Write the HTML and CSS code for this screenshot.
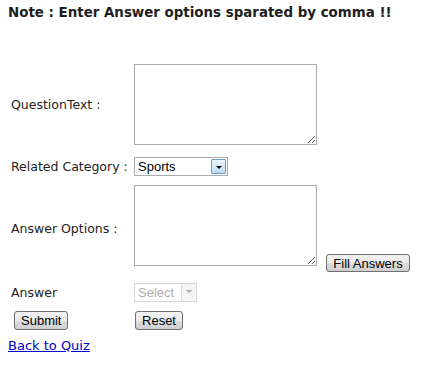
FILE: index.html
```html
<!DOCTYPE html>
<html lang="en">
<head>
    <meta charset="UTF-8">
    <meta name="viewport" content="width=device-width, initial-scale=1.0">
    <title>Add Question</title>
    <link rel="stylesheet" href="styles.css">
</head>
<body>
    <h4 class="note">Note : Enter Answer options sparated by comma !!</h4>

    <form class="question-form">
        <div class="form-row">
            <label class="field-label" for="questionText">QuestionText :</label>
            <div class="field">
                <textarea id="questionText"></textarea>
            </div>
        </div>

        <div class="form-row row-category">
            <label class="field-label" for="category">Related Category :</label>
            <div class="field">
                <span class="select-wrap category-select">
                    <select id="category">
                        <option>Sports</option>
                        <option>Movies</option>
                        <option>General</option>
                    </select>
                    <span class="select-arrow"></span>
                </span>
            </div>
        </div>

        <div class="form-row row-options">
            <label class="field-label" for="answerOptions">Answer Options :</label>
            <div class="field field-bottom">
                <textarea id="answerOptions" class="options-box"></textarea>
                <button type="button" class="fill-btn">Fill Answers</button>
            </div>
        </div>

        <div class="form-row row-answer">
            <label class="field-label" for="answer">Answer</label>
            <div class="field">
                <span class="select-wrap answer-select">
                    <select id="answer" disabled>
                        <option>Select</option>
                    </select>
                    <span class="select-arrow"></span>
                </span>
            </div>
        </div>

        <div class="form-row row-buttons">
            <div class="field-label">
                <button type="submit" class="submit-btn">Submit</button>
            </div>
            <div class="field">
                <button type="reset" class="reset-btn">Reset</button>
            </div>
        </div>
    </form>

    <a href="#" class="back-link">Back to Quiz</a>
</body>
</html>
```

FILE: styles.css
```css
body {
    margin: 0;
    padding: 4px 8px;
    font-family: "DejaVu Sans", Tahoma, sans-serif;
    font-size: 12.5px;
    color: #222;
    background-color: #fff;
}
.note {
    margin: 0;
    font-size: 13.4px;
    line-height: 18px;
    font-weight: bold;
    color: #1e1e1e;
}
.question-form {
    margin-top: 42px;
    margin-left: 3px;
    display: flex;
    flex-direction: column;
    gap: 9px;
}
.form-row {
    display: flex;
    align-items: center;
}
.field-label {
    width: 123px;
    flex-shrink: 0;
    white-space: nowrap;
}
.field {
    display: flex;
    align-items: center;
}
.field-bottom {
    align-items: flex-end;
}
.row-category {
    margin-top: 3px;
}
.row-answer {
    margin-top: 2px;
}
textarea {
    display: block;
    width: 183px;
    height: 81px;
    box-sizing: border-box;
    margin: 0;
    border: 1px solid #a9a9a9;
    font-family: "Liberation Sans", Arial, sans-serif;
    font-size: 13px;
}
.options-box {
    margin-bottom: 6px;
}
.select-wrap {
    position: relative;
    display: inline-block;
}
select {
    display: block;
    margin: 0;
    height: 19px;
    box-sizing: border-box;
    padding: 0 0 0 3px;
    border: 1px solid #a9a9a9;
    border-radius: 0;
    background-color: #fff;
    font-family: "Liberation Sans", Arial, sans-serif;
    font-size: 13px;
    color: #000;
    appearance: none;
    -webkit-appearance: none;
}
.category-select select {
    width: 94px;
    border-color: #a5acb2;
}
.answer-select select {
    width: 63px;
    color: #8c8c8c;
    border-color: #c9c9c9;
}
.select-arrow {
    position: absolute;
    top: 2px;
    right: 2px;
    bottom: 2px;
    width: 15px;
    box-sizing: border-box;
    pointer-events: none;
}
.select-arrow::after {
    content: "";
    position: absolute;
    left: 4px;
    top: 6px;
    border-left: 3px solid transparent;
    border-right: 3px solid transparent;
    border-top: 3px solid #000;
}
.category-select .select-arrow {
    border: 1px solid #6b9ec9;
    border-radius: 1px;
    background: linear-gradient(#eaf6fd, #bcdcf3);
}
.answer-select .select-arrow {
    top: 1px;
    right: 1px;
    bottom: 1px;
    border-left: 1px solid #dcdcdc;
    background: #f4f4f4;
}
.answer-select .select-arrow::after {
    border-top-color: #a8a8a8;
}
button {
    margin: 0;
    height: 19px;
    padding: 0 6px;
    border: 1px solid #707070;
    border-radius: 3px;
    background: linear-gradient(#f2f2f2 0%, #ebebeb 50%, #dddddd 51%, #cfcfcf 100%);
    font-family: "Liberation Sans", Arial, sans-serif;
    font-size: 13px;
    line-height: 15px;
    color: #000;
    cursor: pointer;
}
button:hover {
    background: linear-gradient(#eaf6fd 0%, #d9f0fc 50%, #bee6fd 51%, #a7d9f5 100%);
    border-color: #3c7fb1;
}
.fill-btn {
    margin-left: 9px;
    width: 84px;
    height: 18px;
}
.submit-btn {
    margin-left: 3px;
    width: 54px;
}
.reset-btn {
    margin-left: 1px;
    width: 48px;
}
.back-link {
    display: inline-block;
    margin-top: 8px;
    color: #0000cc;
    font-size: 13px;
}
```
